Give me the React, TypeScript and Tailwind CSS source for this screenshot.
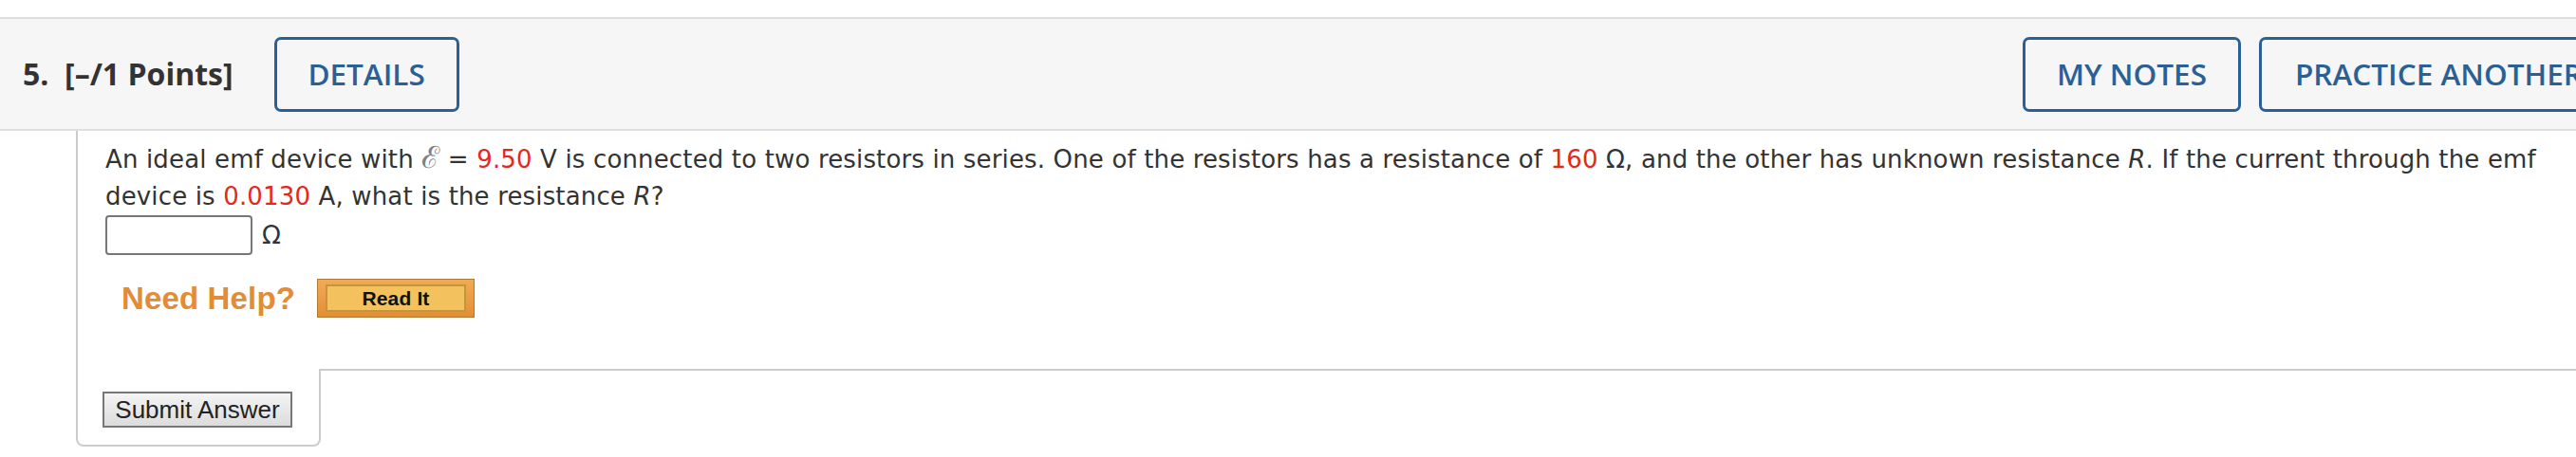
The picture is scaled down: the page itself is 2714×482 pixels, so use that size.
import React from 'react';

const headerBtn =
  "flex h-[79px] shrink-0 items-center justify-center whitespace-nowrap rounded-[7px] border-[3px] border-[#2b6095] text-[31.5px] font-semibold text-[#2b6095]";

function Red({ children }: { children: React.ReactNode }) {
  return <span className="text-[#e4281c]">{children}</span>;
}

export default function App() {
  return (
    <div className="h-[482px] w-[2714px] overflow-hidden bg-white">
      {/* question header */}
      <div className="mt-[18px] flex h-[120px] items-center border-y-2 border-[#dedede] bg-[#f6f6f6] font-['Open_Sans',sans-serif]">
        <div className="flex flex-1 items-center pl-[24px]">
          <span className="whitespace-nowrap text-[32px] font-bold text-[#333]">5.&nbsp; [–/1 Points]</span>
          <button type="button" className={`${headerBtn} ml-[43px] w-[195px]`}>
            DETAILS
          </button>
        </div>
        <div className="flex w-[583px] shrink-0 items-center gap-[19px] overflow-hidden">
          <button type="button" className={`${headerBtn} w-[230px]`}>
            MY NOTES
          </button>
          <button type="button" className={`${headerBtn} px-[35px]`}>
            PRACTICE ANOTHER
          </button>
        </div>
      </div>

      {/* question body */}
      <div className="ml-[80px] h-[251px] border-l-2 border-[#cccccc] pl-[29px] pt-[11px] font-['DejaVu_Sans',sans-serif] text-[26px] leading-[39px] tracking-[0.15px] text-[#333]">
        <p className="whitespace-nowrap">
          An ideal emf device with{' '}
          <span className="font-['DejaVu_Serif',serif] text-[32px] leading-none text-[#808080]">ℰ</span> ={' '}
          <Red>9.50</Red> V is connected to two resistors in series. One of the resistors has a resistance of{' '}
          <Red>160</Red> Ω, and the other has unknown resistance <i>R</i>. If the current through the emf
          <br />
          device is <Red>0.0130</Red> A, what is the resistance <i>R</i>?
        </p>
        <div className="flex items-center">
          <input
            type="text"
            aria-label="answer"
            className="h-[42px] w-[155px] rounded-[4px] border-2 border-[#777] bg-white outline-none"
          />
          <span className="ml-[10px]">Ω</span>
        </div>
        <div className="mt-[25px] flex items-center font-['Liberation_Sans',Arial,sans-serif]">
          <span className="w-[223px] shrink-0 pl-[17px] text-[33px] font-bold leading-[41px] text-[#e38b35]">
            Need Help?
          </span>
          <button
            type="button"
            className="h-[41px] w-[166px] border border-[#b07a35] bg-gradient-to-b from-[#f2aa55] to-[#e48e33] px-[8px] py-[5px]"
          >
            <span className="flex h-full w-full items-center justify-center border-2 border-[#c8923f] bg-[#f3c15d] text-[21px] font-bold text-[#111]">
              Read It
            </span>
          </button>
        </div>
      </div>

      {/* submit tab */}
      <div className="flex">
        <div className="ml-[80px] h-[82px] w-[258px] shrink-0 rounded-b-[8px] border-2 border-t-0 border-[#cccccc] pl-[26px] pt-[24px]">
          <button
            type="button"
            className="h-[38px] w-[200px] border-2 border-[#777] bg-gradient-to-b from-[#f4f4f4] to-[#dcdcdc] font-['Liberation_Sans',Arial,sans-serif] text-[26px] leading-none text-[#222]"
          >
            Submit Answer
          </button>
        </div>
        <div className="flex-1 border-t-2 border-[#cccccc]" />
      </div>
    </div>
  );
}
